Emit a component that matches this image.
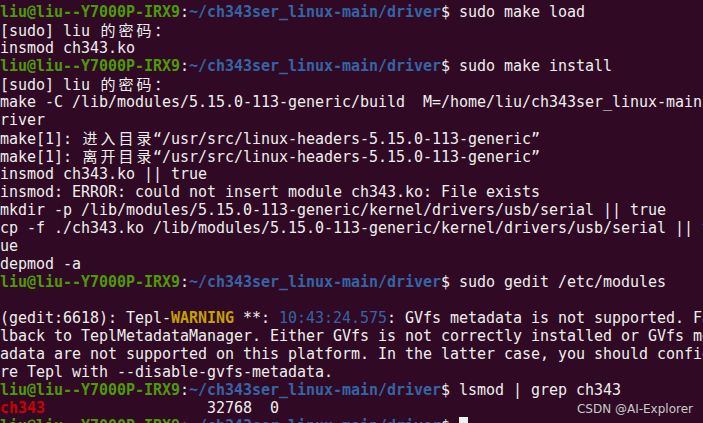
import React from "react";

const CJK = /[\u3000-\u303f\u4e00-\u9fff\uff00-\uffef]/;

function T({ s, className = "" }) {
  const parts = [];
  let buf = "";
  let k = 0;
  for (const ch of s) {
    if (CJK.test(ch)) {
      if (buf) {
        parts.push(<span key={k++}>{buf}</span>);
        buf = "";
      }
      parts.push(
        <span
          key={k++}
          className="inline-block w-[18px] text-center font-['Noto_Sans_CJK_SC','DejaVu_Sans_Mono',monospace]"
        >
          {ch}
        </span>
      );
    } else buf += ch;
  }
  if (buf) parts.push(<span key={k++}>{buf}</span>);
  return <span className={className}>{parts}</span>;
}

function Prompt({ cmd, cursor }) {
  return (
    <div className="h-[18px]">
      <span className="font-bold text-[#4e9a06]">liu@liu--Y7000P-IRX9</span>
      <span>:</span>
      <span className="font-bold text-[#3465a4]">~/ch343ser_linux-main/driver</span>
      <span>$ {cmd}</span>
      {cursor && <span className="inline-block w-[9px] h-[18px] align-top bg-[#f0f0f0]"></span>}
    </div>
  );
}

function L({ children }) {
  return <div className="h-[18px]">{children}</div>;
}

export default function App() {
  return (
    <div className="relative w-[703px] h-[423px] overflow-hidden bg-[#300a24] text-[#eeeeec] font-['DejaVu_Sans_Mono',monospace] text-[15px] leading-[18px] tracking-[-0.03px] whitespace-pre pt-[3px]">
      <Prompt cmd="sudo make load" />
      <L><T s="[sudo] liu 的密码：" /></L>
      <L>insmod ch343.ko</L>
      <Prompt cmd="sudo make install" />
      <L><T s="[sudo] liu 的密码：" /></L>
      <L>make -C /lib/modules/5.15.0-113-generic/build  M=/home/liu/ch343ser_linux-main/d</L>
      <L>river</L>
      <L><T s="make[1]: 进入目录“/usr/src/linux-headers-5.15.0-113-generic”" /></L>
      <L><T s="make[1]: 离开目录“/usr/src/linux-headers-5.15.0-113-generic”" /></L>
      <L>insmod ch343.ko || true</L>
      <L>insmod: ERROR: could not insert module ch343.ko: File exists</L>
      <L>mkdir -p /lib/modules/5.15.0-113-generic/kernel/drivers/usb/serial || true</L>
      <L>cp -f ./ch343.ko /lib/modules/5.15.0-113-generic/kernel/drivers/usb/serial || tr</L>
      <L>ue</L>
      <L>depmod -a</L>
      <Prompt cmd="sudo gedit /etc/modules" />
      <L> </L>
      <L>
        <span>(gedit:6618): Tepl-</span>
        <span className="font-bold text-[#c4a000]">WARNING</span>
        <span> **: </span>
        <span className="text-[#3465a4]">10:43:24.575</span>
        <span>: GVfs metadata is not supported. Fal</span>
      </L>
      <L>lback to TeplMetadataManager. Either GVfs is not correctly installed or GVfs met</L>
      <L>adata are not supported on this platform. In the latter case, you should configu</L>
      <L>re Tepl with --disable-gvfs-metadata.</L>
      <Prompt cmd="lsmod | grep ch343" />
      <L>
        <span className="font-bold text-[#cc0000]">ch343</span>
        <span>                  32768  0</span>
      </L>
      <Prompt cmd="" cursor />
      <div className="absolute right-[10px] bottom-[7px] font-['DejaVu_Sans',sans-serif] text-[12px] leading-[14px] tracking-normal text-[#c9c9c9]">
        CSDN @AI-Explorer
      </div>
    </div>
  );
}
